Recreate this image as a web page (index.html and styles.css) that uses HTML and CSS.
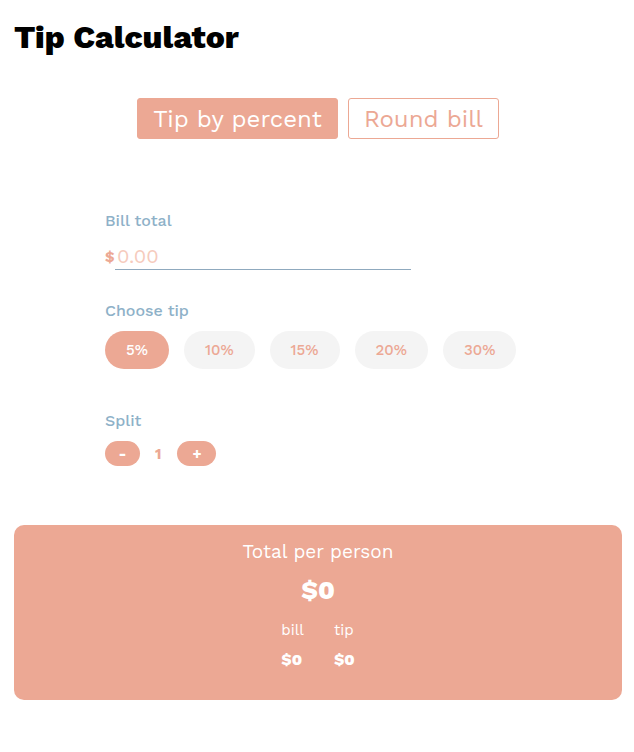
FILE: index.html
```html
<!DOCTYPE html>
<html lang="en">
<head>
    <meta charset="UTF-8">
    <title>Tip Calculator</title>
    <link rel="stylesheet" href="styles.css">
</head>
<body>
    <h1 class="title">Tip Calculator</h1>

    <div class="mode-toggle">
        <button class="mode-btn active">Tip by percent</button>
        <button class="mode-btn">Round bill</button>
    </div>

    <div class="form">
        <div class="label">Bill total</div>
        <div class="bill-row">
            <span class="currency">$</span>
            <input class="bill-input" type="text" placeholder="0.00">
        </div>

        <div class="label tip-label">Choose tip</div>
        <div class="tip-options">
            <button class="tip-pill active">5%</button>
            <button class="tip-pill">10%</button>
            <button class="tip-pill">15%</button>
            <button class="tip-pill">20%</button>
            <button class="tip-pill">30%</button>
        </div>

        <div class="label split-label">Split</div>
        <div class="split-row">
            <button class="split-btn minus">-</button>
            <span class="split-count">1</span>
            <button class="split-btn">+</button>
        </div>
    </div>

    <div class="result">
        <div class="result-title">Total per person</div>
        <div class="result-total">$0</div>
        <div class="breakdown">
            <div class="breakdown-col">
                <div class="breakdown-name">bill</div>
                <div class="breakdown-value">$0</div>
            </div>
            <div class="breakdown-col">
                <div class="breakdown-name">tip</div>
                <div class="breakdown-value">$0</div>
            </div>
        </div>
    </div>
</body>
</html>
```

FILE: styles.css
```css
body {
    margin: 0;
    padding: 0 12px 0 14px;
    font-family: "Work Sans", Inter, "Open Sans", sans-serif;
    background: #fff;
    color: #000;
}
button {
    font-family: inherit;
    cursor: pointer;
}
.title {
    margin: 19px 0 0;
    font-size: 32px;
    line-height: 36px;
    font-weight: 800;
}
.mode-toggle {
    display: flex;
    justify-content: center;
    gap: 10px;
    margin-top: 43px;
}
.mode-btn {
    height: 41px;
    padding: 0 15px;
    font-size: 24px;
    font-weight: 400;
    color: #eca894;
    background: #fff;
    border: 1px solid #eca894;
    border-radius: 3px;
}
.mode-btn.active {
    background: #eca894;
    color: #fff;
}
.form {
    width: 426px;
    margin: 72px auto 0;
}
.label {
    font-size: 16px;
    line-height: 20px;
    font-weight: 500;
    color: #8eb1c8;
}
.bill-row {
    display: flex;
    align-items: flex-end;
    margin-top: 11px;
}
.currency {
    font-size: 15px;
    font-weight: 700;
    color: #eca894;
    width: 10px;
    padding-bottom: 4px;
}
.bill-input {
    box-sizing: border-box;
    width: 296px;
    height: 28px;
    padding: 0 2px;
    border: none;
    border-bottom: 1px solid #8fa9be;
    font-family: inherit;
    font-size: 20px;
    color: #eca894;
    outline: none;
    background: transparent;
}
.bill-input::placeholder {
    color: #f6cbbd;
}
.tip-label {
    margin-top: 31px;
}
.tip-options {
    display: flex;
    gap: 15px;
    margin-top: 10px;
}
.tip-pill {
    height: 38px;
    padding: 0 21px;
    border: none;
    border-radius: 19px;
    background: #f4f4f4;
    color: #eca894;
    font-size: 15px;
    font-weight: 500;
}
.tip-pill.active {
    background: #eca894;
    color: #fff;
}
.split-label {
    margin-top: 42px;
}
.split-row {
    display: flex;
    align-items: center;
    margin-top: 10px;
}
.split-btn {
    height: 25px;
    padding: 0 15px;
    border: none;
    border-radius: 13px;
    background: #eca894;
    color: #fff;
    font-size: 15px;
    font-weight: 700;
}
.split-btn.minus {
    padding: 0 13.5px;
}
.split-count {
    margin: 0 16px 0 15px;
    font-size: 15px;
    font-weight: 700;
    color: #eca894;
}
.result {
    margin-top: 59px;
    padding: 15px 0 30px;
    background: #eca894;
    border-radius: 10px;
    color: #fff;
    text-align: center;
}
.result-title {
    font-size: 19px;
    line-height: 24px;
}
.result-total {
    margin-top: 11px;
    font-size: 26px;
    line-height: 30px;
    font-weight: 800;
}
.breakdown {
    display: flex;
    justify-content: center;
    gap: 30px;
    margin-top: 15px;
}
.breakdown-col {
    text-align: left;
}
.breakdown-name {
    font-size: 15px;
    line-height: 20px;
}
.breakdown-value {
    margin-top: 10px;
    font-size: 16px;
    line-height: 20px;
    font-weight: 800;
}
```
